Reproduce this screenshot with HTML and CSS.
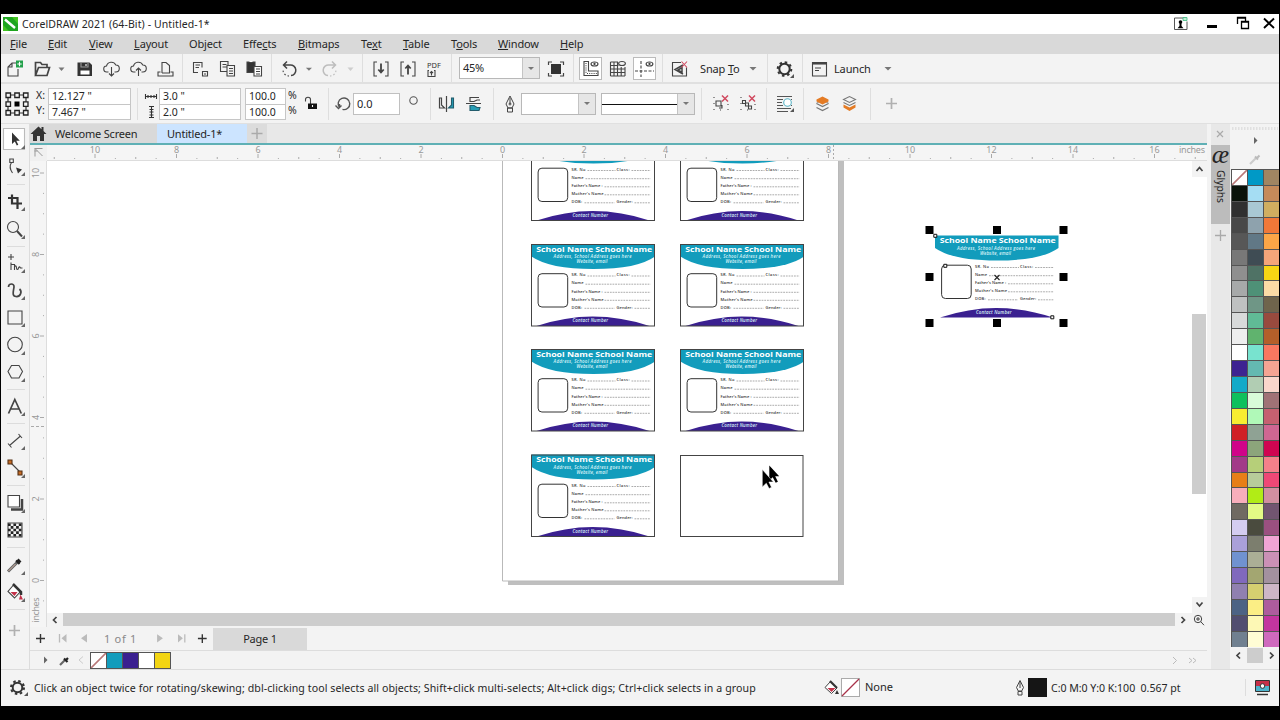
FILE: index.html
```html
<!DOCTYPE html>
<html lang="en">
<head>
<meta charset="utf-8">
<title>CorelDRAW 2021 (64-Bit) - Untitled-1*</title>
<link rel="stylesheet" href="styles.css">
</head>
<body>
<div class="app">
  <header class="titlebar">
    <svg class="logo" viewBox="0 0 15 14"><rect width="15" height="14" fill="#43c321"/><path d="M0 0h9L15 7v7H6L0 8z" fill="#1fa51f"/><path d="M2 2.5L12 11" stroke="#fff" stroke-width="2.4"/></svg>
    <span class="title">CorelDRAW 2021 (64-Bit) - Untitled-1*</span>
    <svg class="winbtns" viewBox="1170 14 109 20">
      <path d="M1186 18h-11.5v11.5h12.500v-8" fill="none" stroke="#555" stroke-width="1"/><circle cx="1180.500" cy="22" r="1.800"/><path d="M1179.500 22h2v4l2 2.200h-6l2-2.200z"/><path d="M1183 17.500h4v3h-4z" fill="#bff0d6" stroke="#3cb981" stroke-width=".8"/>
      <path d="M1207 25h10v3h-10z"/>
      <path d="M1237.500 24v-6.500h8v3.500M1237 18.200h9" fill="none" stroke="#000" stroke-width="1.300"/><path d="M1241.500 21.500h7v7h-7zM1241 22.200h8" fill="#fff" stroke="#000" stroke-width="1.300"/>
      <path d="M1264 18.500l10 9.500M1274 18.500l-10 9.500" stroke="#000" stroke-width="1.900"/>
    </svg>
  </header>

  <nav class="menu">
    <span><u>F</u>ile</span><span><u>E</u>dit</span><span><u>V</u>iew</span><span><u>L</u>ayout</span><span>Ob<u>j</u>ect</span><span>Effe<u>c</u>ts</span><span><u>B</u>itmaps</span><span>Te<u>x</u>t</span><span><u>T</u>able</span><span>T<u>o</u>ols</span><span><u>W</u>indow</span><span><u>H</u>elp</span>
  </nav>

  <div class="toolbar">
    <svg class="ic" viewBox="0 0 27 27"><path d="M15 8H11L7 12v9h10v-7M11 8v4H7"/><path d="M15 5.500h7v7h-7z" fill="#22a04a" stroke="none"/><path d="M18.500 6.800v4.400M16.300 9h4.400" stroke="#fff"/></svg>
    <svg class="ic" viewBox="0 0 27 27"><path d="M7.500 20V7.500h5l1.500 2h5v3M7.500 20.500l3-8h11l-2.500 8z" fill="none" stroke-width="1.700"/></svg>
    <svg class="ar" viewBox="0 0 15 27"><path d="M3.500 12.500h6l-3 3.500z"/></svg>
    <svg class="ic" viewBox="0 0 27 27"><path d="M7.500 7.500h12l2.500 2.500v11H7.500z" fill="#333" stroke="none"/><path d="M10.500 15.500h9v4h-9z" fill="#fff" stroke="none"/><path d="M11 8v4h7v-4" stroke="#999"/><path d="M16 9v2" stroke="#fff"/></svg>
    <svg class="ic" viewBox="0 0 27 27"><path d="M11.500 17H10a3 3 0 0 1-.5-6 5 5 0 0 1 9.300-1 3.500 3.500 0 0 1 0 7H17.500M14.500 12v9M12 18.500l2.500 2.500 2.500-2.500"/></svg>
    <svg class="ic" viewBox="0 0 27 27"><path d="M11.500 17H10a3 3 0 0 1-.5-6 5 5 0 0 1 9.300-1 3.500 3.500 0 0 1 0 7H17.500M14.500 21v-8M12 15.500l2.500-2.500 2.500 2.500"/></svg>
    <svg class="ic" viewBox="0 0 27 27"><path d="M9.500 17H7v4h15v-4h-2.500M11 18V7.500h4l3.500 3V18h-7.500" /></svg>
    <i class="sep"></i>
    <svg class="ic" viewBox="0 0 27 27"><path d="M12 17.500H7.500V7.500H16v5M9.500 10h4.500M9.500 12.500h3.500M16.500 16.500h5v4.500h-5zM18 19h2"/></svg>
    <svg class="ic" viewBox="0 0 27 27"><path d="M14 16.500H7.500v-10H15v4M9.500 9.500h4M9.500 12h4M14 10.500h7.500V21H14zM16 13.500h4M16 16h4M16 18.500h4"/></svg>
    <svg class="ic" viewBox="0 0 27 27"><path d="M7 7h8v10.500H7z" fill="#333"/><path d="M9.500 6.500h3" stroke="#fff"/><path d="M14 11.500h7.500V21H14z" fill="#fff"/><path d="M16 14h4M16 16.500h4M16 19h4"/></svg>
    <i class="sep"></i>
    <svg class="ic" viewBox="0 0 27 27"><path d="M12 6.500L8.500 10l3.500 3.500M9 10h6a5.300 5.300 0 0 1 1 10.600" stroke-width="1.500"/><path d="M14 21a6 6 0 0 1-6-6" stroke-dasharray="1.500 2"/></svg>
    <svg class="ar w13" viewBox="0 0 15 27"><path d="M4.500 12.500h7l-3.500 3.500z"/></svg>
    <svg class="ic faint" viewBox="0 0 27 27"><path d="M17 6.500l3.500 3.500-3.500 3.500M20 10h-6a5.300 5.300 0 0 0-1 10.600" stroke-width="1.500"/><path d="M15 21a6 6 0 0 0 6-6" stroke-dasharray="1.500 2"/></svg>
    <svg class="ar w16 faint" viewBox="0 0 15 27"><path d="M5 12.500h6l-3 3.500z"/></svg>
    <i class="sep"></i>
    <svg class="ic" viewBox="0 0 27 27"><path d="M11 7H8v14h3M19 7h3v14h-3"/><path d="M15 8.500v9M12.300 14.500l2.700 3 2.700-3" stroke-width="1.800"/></svg>
    <svg class="ic" viewBox="0 0 27 27"><path d="M11 7H8v14h3M19 7h3v14h-3"/><path d="M15 19.500v-9M12.300 13.500l2.700-3 2.700 3" stroke-width="1.800"/></svg>
    <svg class="ic" viewBox="0 0 27 27"><text x="7" y="13" class="pdf">PDF</text><path d="M9 15.500H8v6h7v-6h-1M11.500 20.500v-4M10 18l1.500-1.500L13 18"/></svg>
    <i class="sep w9"></i>
    <div class="combo zoomlevel"><span>45%</span><b></b></div>
    <svg class="ic" viewBox="0 0 27 27"><path d="M9 9h10v10H9z" fill="#333" stroke="none"/><path d="M6.500 10V7H10M18 7h3.500v3M21.500 18v3H18M10 21H6.500v-3" stroke-width="1.200"/></svg>
    <i class="sep"></i>
    <svg class="ic boxed" viewBox="0 0 27 27"><path d="M7 6.500h4.500v9.500h9.500v4.500H7z"/><path d="M9 8v11M10 18.500h10" stroke-dasharray="1 1.200"/><ellipse cx="17.500" cy="9" rx="3.500" ry="2"/><circle cx="17.500" cy="9" r=".6"/></svg>
    <svg class="ic" viewBox="0 0 27 27"><path d="M6.500 7H14M6.500 10.500h8M6.500 14H21M6.500 17.500H21M6.500 21H21M6.500 7v14M10 7v14M13.500 7v14M17.200 12v9M21 12v9"/><ellipse cx="18" cy="8.500" rx="3.400" ry="2"/></svg>
    <svg class="ic boxed" viewBox="0 0 27 27"><path d="M10 6v16M4 16h19" stroke-dasharray="3 1.500"/><ellipse cx="18.500" cy="9" rx="3.400" ry="2"/><circle cx="18.500" cy="9" r=".6"/></svg>
    <i class="sep"></i>
    <svg class="ic" viewBox="0 0 27 27"><path d="M15 7.500H6.500V21h14v-8.500"/><path d="M17 10l-8 4.500 8 4.500M16 12.500v5l-4-2.500z" stroke-width="1.500"/><path d="M15.500 6.500l5.500 6M21 6.500l-5.500 6" stroke="#d04a60"/></svg>
    <span class="label snap">Snap <u>T</u>o</span>
    <svg class="ar w20" viewBox="0 0 15 27"><path d="M4 12h7l-3.500 3.500z"/></svg>
    <i class="sep"></i>
    <svg class="ic" viewBox="0 0 27 27"><circle cx="13.500" cy="14" r="5.200" stroke="#333" stroke-width="2"/><circle cx="13.500" cy="14" r="6.800" stroke="#333" stroke-width="2" stroke-dasharray="2.500 2.840"/><path d="M23 19v4h-4z" fill="#555" stroke="none"/></svg>
    <i class="sep"></i>
    <svg class="ic" viewBox="0 0 27 27"><path d="M6.500 7.500h14V21h-14z"/><path d="M6.500 8.300h14" stroke-width="2.500"/><path d="M9 13h6M9 15.500h4"/></svg>
    <span class="label launch">Launch</span>
    <svg class="ar w20" viewBox="0 0 15 27"><path d="M4 12h7l-3.500 3.500z"/></svg>
  </div>

  <div class="propbar">
    <svg class="origin" viewBox="0 0 24 24"><path d="M3 3h18v18H3z" fill="none" stroke="#333" stroke-width="1.200"/><g fill="#f8f8f8" stroke="#222" stroke-width="1.300"><path d="M1 1h4.500v4.500H1zM9.800 1h4.500v4.500H9.800zM18.500 1H23v4.500h-4.500zM1 9.800h4.500v4.500H1zM18.500 9.800H23v4.500h-4.500zM1 18.500h4.500V23H1zM9.800 18.500h4.500V23H9.800zM18.500 18.500H23V23h-4.500z"/></g><path d="M9.500 9.500h5v5h-5z"/></svg>
    <div class="pair names"><span>X:</span><span>Y:</span></div>
    <div class="pair inputs pos"><span>12.127 "</span><span>7.467 "</span></div>
    <i class="sep w13"></i>
    <svg class="dims" viewBox="0 0 14 32"><path d="M1 8.500h12M1.500 6v5M4 7v3M7 7v3M10 7v3M12.500 6v5M7.500 18v12M5 18.500h5M5.500 21.500h4M5.500 24h4M5.500 27h4M5 29.500h5" stroke="#333" stroke-width="1.100"/></svg>
    <div class="pair inputs size"><span>3.0 "</span><span>2.0 "</span></div>
    <div class="pair inputs scale"><span>100.0</span><span>100.0</span></div>
    <div class="pair names pct"><span>%</span><span>%</span></div>
    <svg class="ic" viewBox="0 0 27 27"><path d="M11.500 14V9.500c0-3-5-3-5 0v2" /><path d="M9 13.500h9V19H9z" fill="#111" stroke="none"/><path d="M13.500 15v2" stroke="#fff"/></svg>
    <i class="sep w5"></i>
    <svg class="ic rot" viewBox="0 0 27 27"><path d="M9.500 17.500a5.800 5.800 0 1 1 3 1.900M9.500 18v-4M5.500 15.500l3 3 3-3" stroke-width="1.400" stroke="#555"/></svg>
    <div class="field angle">0.0</div>
    <svg class="ic" viewBox="0 0 27 27"><circle cx="13.500" cy="10.500" r="3.700" stroke="#555"/></svg>
    <i class="sep w6"></i>
    <svg class="ic" viewBox="0 0 27 27"><path d="M6.500 8v10h5l-3-3V8zM13.500 6v16" stroke-width="1.200"/><path d="M20.500 8v10h-5l3-3V8z" fill="#279db5" stroke="#235c6c"/></svg>
    <svg class="ic" viewBox="0 0 27 27"><path d="M19 7.500h-9v4h4l3-1.500h3M6 13.500h15" stroke-width="1.200"/><path d="M19 20.500h-9v-5h4l3 2h3z" fill="#279db5" stroke="#235c6c"/></svg>
    <i class="sep w13"></i>
    <svg class="nib" viewBox="0 0 20 27"><path d="M10 6l-4 8 2 4h4l2-4zM10 8v6M7.500 18h5v4h-5z"/><circle cx="10" cy="14" r="1"/></svg>
    <div class="combo outline"><span></span><b></b></div>
    <div class="combo linestyle"><span><hr></span><b></b></div>
    <i class="sep w12"></i>
    <svg class="ic" viewBox="0 0 27 27"><path d="M7 7v1M7 13v1M7 19v1M13 20h1M21 19v1M21 14v1" /><path d="M9 11h5v5H9zM12 18h3v-3"/><path d="M15 5.500l6 6M21 5.500l-6 6" stroke="#d04a60" stroke-width="1.500"/></svg>
    <svg class="ic" viewBox="0 0 27 27"><path d="M7 7v1M7 13v1M7 19v1M13 20h1M21 19v1M21 14v1"/><path d="M8.500 10.500h3v3h-3zM11.500 13h3v3h-3zM14.500 16h3v3h-3z"/><path d="M15 5.500l6 6M21 5.500l-6 6" stroke="#d04a60" stroke-width="1.500"/></svg>
    <i class="sep w10"></i>
    <svg class="ic" viewBox="0 0 27 27"><path d="M6 6.500h15M6 9.500h6M6 12.500h5M6 15.500h6M6 18.500h14M6 21.500h11M20 9.500h1M20 15.500h1" stroke="#555"/><circle cx="16.500" cy="12.500" r="3.800" fill="#fff" stroke="#5bb5c6"/><path d="M23 18v4h-4z" fill="#555" stroke="none"/></svg>
    <i class="sep w11"></i>
    <svg class="ic" viewBox="0 0 27 27"><path d="M7.500 13.500l6 3 6-3M7.500 17.500l6 3 6-3M7.500 13.500l2-1M19.500 13.500l-2-1" stroke="#777" stroke-width="1.300"/><path d="M7.500 9.500l6-3 6 3v2l-6 3-6-3z" fill="#e47b24" stroke="none"/></svg>
    <svg class="ic" viewBox="0 0 27 27"><path d="M7.500 9.500l6-3 6 3-6 3zM7.500 12.500l6 3 6-3" stroke="#777"/><path d="M7.500 14.500l6 3 6-3v3l-6 3.500-6-3.500z" fill="#e47b24" stroke="none"/></svg>
    <i class="sep w15"></i>
    <svg class="plus" viewBox="0 0 27 27"><path d="M13.500 8v11M8 13.500h11"/></svg>
  </div>

  <main class="main">
    <aside class="toolbox">
      <svg class="ic" viewBox="0 0 27 27"><path d="M3.500 2.500h21v21h-21z" fill="#fff" stroke="#bbb"/><path d="M12 6.500v11.500l2.800-2.500 2 4 1.500-.8-2-4h3.500z" fill="#333" stroke="none"/><path class="corner" d="M25 19v4h-4z"/></svg>
      <svg class="ic" viewBox="0 0 27 27"><path d="M11.500 9.500c-2 3-1.500 7 1 10.500M9.800 6h3.500v3.500H9.800z"/><path d="M16 14.500l6 2-4 4z" fill="#333" stroke="none"/><path class="corner" d="M25 19v4h-4z"/></svg>
      <i></i>
      <svg class="ic" viewBox="0 0 27 27"><path d="M8 10h9.500V21M12 6.500V15.500H22" stroke="#333" stroke-width="2.200"/><path class="corner" d="M25 19v4h-4z"/></svg>
      <svg class="ic" viewBox="0 0 27 27"><circle cx="13" cy="12" r="5.500"/><path d="M17 16l5 5.500" stroke-width="2"/><path class="corner" d="M25 20v4h-4z"/></svg>
      <i></i>
      <svg class="ic" viewBox="0 0 27 27"><path d="M8 7h6M11 4v6M11 12.500V20M11 14.500h3.500v5.500M14.500 17c1-2 2-1 2 1s1.500 2 2 0 1.500-1 2 0h2"/><path class="corner" d="M25 19v4h-4z"/></svg>
      <svg class="ic" viewBox="0 0 27 27"><path d="M8.500 10c0-4 6-4 5.500 0-.5 4-2.500 9 2 9.500s6.500-5 3.500-7.500" stroke-width="1.700"/><path class="corner" d="M25 19v4h-4z"/></svg>
      <svg class="ic" viewBox="0 0 27 27"><path d="M8 7h14v13H8z"/><path class="corner" d="M25 19v4h-4z"/></svg>
      <svg class="ic" viewBox="0 0 27 27"><circle cx="15" cy="13.500" r="7.300"/><path class="corner" d="M25 20v4h-4z"/></svg>
      <svg class="ic" viewBox="0 0 27 27"><path d="M11.500 7.500h7.500l3.500 6-3.500 6.500h-7.500L8 13.500z"/><path class="corner" d="M25 20v4h-4z"/></svg>
      <i></i>
      <svg class="ic" viewBox="0 0 27 27"><path d="M8.500 20.500L14.800 6.500l6.500 14M10.500 16h8.500" stroke-width="1.700"/><path class="corner" d="M25 19v4h-4z"/></svg>
      <i class="tight"></i>
      <svg class="ic" viewBox="0 0 27 27"><path d="M9.500 18.500L20.500 9M8 16.500l3.500 4M18.500 7l3.500 4"/><path class="corner" d="M25 19v4h-4z"/></svg>
      <svg class="ic" viewBox="0 0 27 27"><path d="M10 8l10 10"/><path d="M8 6h4v4H8zM18 17h4v4h-4z" fill="#c46a24" stroke="#553014"/><path class="corner" d="M25 20v4h-4z"/></svg>
      <i></i>
      <svg class="ic" viewBox="0 0 27 27"><path d="M11 20.500h11V10" stroke="#444" stroke-width="2.500"/><path d="M8 6.500h11.500V18H8z" fill="#fff"/><path class="corner" d="M25 20v4h-4z"/></svg>
      <svg class="ic" viewBox="0 0 27 27"><path d="M8 7h14v14H8z"/><path d="M8 8.700h14M8 14h14M8 19.200h14" stroke-width="2.600" stroke-dasharray="2.700 2.700" stroke="#222"/><path d="M10.700 11.400h11M10.700 16.600h11" stroke-width="2.600" stroke-dasharray="2.700 2.700" stroke="#222"/></svg>
      <i></i>
      <svg class="ic" viewBox="0 0 27 27"><path d="M8 20.500l9.500-9.500" stroke="#666" stroke-width="3"/><path d="M8.500 20l7-7" stroke="#dba" stroke-width="1"/><path d="M16 9.500l3.500 3.500" stroke="#222" stroke-width="2"/><path d="M18 11l2-2" stroke="#222" stroke-width="4"/><path class="corner" d="M25 20v4h-4z"/></svg>
      <svg class="ic" viewBox="0 0 27 27"><path d="M13.500 7l7 6.500-6 6.500L8 13.500z" fill="#fff"/><path d="M10.500 14h7l-3 4z" fill="#c33048" stroke="none"/><path d="M13 6l8 8v3" stroke="#333" stroke-width="2.500"/><path d="M20.500 16.500l2.500 5h-4z" fill="#c33048" stroke="none"/><path class="corner" d="M25 20v4h-4z"/></svg>
      <i></i>
      <svg class="plus tool" viewBox="0 0 27 27"><path d="M14.500 8v11M9 13.500h11"/></svg>
    </aside>

    <section class="doc">
      <div class="tabs">
        <svg class="home" viewBox="0 0 28 19"><path d="M8.500 2.500L0.500 10H3v7h4v-5h3v5h4v-7h2.500L13.500 7V3h-2v2.200z" fill="#333"/></svg>
        <span class="tab">Welcome Screen</span>
        <span class="tab active">Untitled-1*</span>
        <svg class="newtab" viewBox="0 0 20 19"><path d="M10 4v11M4.500 9.500h11" stroke="#aaa" stroke-width="1.500"/></svg>
      </div>
      <div class="work">
        <svg class="corner-box" viewBox="0 0 16 16"><path d="M4 3.500h8M4.500 3.500v8M5 4l7 7M4 6h3" stroke="#999" fill="none"/></svg>
        <svg class="hruler" id="hruler" viewBox="47 145 1160 16"></svg>
        <svg class="vruler" id="vruler" viewBox="30 161 17 466"></svg>
        <div class="view">
          <svg class="canvas" viewBox="47 161 1145 452">
            <defs>
              <g id="idcard">
                <path d="M0 0H123.500V12.500Q106 25 62 25Q18 25 0 12.500z" fill="#129cbc"/>
                <text class="c-title" x="4.700" y="7.900" textLength="116" lengthAdjust="spacingAndGlyphs">School Name School Name</text>
                <text class="c-sub" x="22" y="14" textLength="78">Address, School Address goes here</text>
                <text class="c-sub" x="45" y="19" textLength="31">Website, email</text>
                <rect x="6.600" y="29.700" width="29.600" height="33.300" rx="3.800" fill="#fff" stroke="#333" stroke-width="1"/>
                <g class="c-lab">
                  <text x="40" y="32.300" textLength="14">SR. No</text><text x="85" y="32.300" textLength="13">Class:</text>
                  <text x="40" y="40.400" textLength="12">Name</text>
                  <text x="40" y="48.500" textLength="31">Father's Name :</text>
                  <text x="40" y="56.500" textLength="32">Mother's Name</text>
                  <text x="40" y="64.500" textLength="10.500">DOB:</text><text x="85" y="64.500" textLength="16">Gender:</text>
                </g>
                <path d="M56 32h28M100 32h19M54 40.200h65M73 48.300h46M73 56.300h46M53 64.300h30M103 64.300h16" stroke="#888" stroke-width=".7" stroke-dasharray="1.800 .9"/>
                <path d="M5 82Q34 72.500 61 72.500Q90 72.500 118 82z" fill="#3a2090"/>
                <text class="c-sub" x="41" y="78.200" textLength="35.500">Contact Number</text>
              </g>
            </defs>
            <path d="M508 161H844V585H508z" fill="#bfbfbf"/>
            <path d="M502.500 150H838.500V581H502.500z" fill="#fff" stroke="#b9b9b9"/>
            <g id="cards"></g>
            <rect class="frame" x="680.500" y="455.500" width="122.500" height="81"/>
            <g>
              <use href="#idcard" x="935" y="235.500"/>
              <path d="M925.500 226h8v8h-8zM993 226h8v8h-8zM1059.500 226h8v8h-8zM925.500 273h8v8h-8zM1059.500 273h8v8h-8zM925.500 319h8v8h-8zM993 319h8v8h-8zM1059.500 319h8v8h-8z"/>
              <path d="M994.500 275l5 5M999.500 275l-5 5" stroke="#222" stroke-width="1.100"/>
              <path d="M933.800 234.300h3v3h-3zM943.800 264.300h3v3h-3zM1050.800 315.800h3v3h-3z" fill="#fff" stroke="#111" stroke-width="1"/>
            </g>
            <path id="pointer" d="M769.300 465.500v15l3.400-3.200 3 5.500 2.200-1.100-2.700-5.500h4z"/>
            <path d="M762.300 469.500v17.500l4-3.800 2.800 5.300 2.400-1.200-2.600-5.300h4.500z" stroke="#fff" stroke-width=".5"/>
          </svg>
          <div class="vscroll">
            <svg viewBox="0 0 15 16"><path d="M4.500 10l3-3.500 3 3.500"/></svg>
            <div class="track"><b></b></div>
            <svg viewBox="0 0 15 16"><path d="M4.500 5.500l3 3.500 3-3.500"/></svg>
          </div>
          <div class="hscroll">
            <svg viewBox="0 0 16 14"><path d="M9.500 4L6.500 7l3 3"/></svg>
            <b></b>
            <svg viewBox="0 0 16 14"><path d="M6.500 4l3 3-3 3"/></svg>
            <svg viewBox="0 0 16 14"><g stroke-width="1"><circle cx="7" cy="6" r="3.700"/><path d="M9.800 8.700l3.200 3.500M5 6h4M7 4v4"/></g></svg>
          </div>
        </div>
      </div>
      <div class="pages">
        <svg class="pagenav" viewBox="30 628 72 22"><path d="M36 638.500h9M40.500 634v9" stroke="#333" stroke-width="1.400"/><path d="M59.500 634v8.500" stroke="#bbb" stroke-width="1.300"/><path d="M66.500 634v8.500l-5-4.200zM87 634v8.500l-6-4.200z" fill="#bbb"/></svg>
        <span class="count">1 of 1</span>
        <svg class="pagenav2" viewBox="141 628 72 22"><path d="M155.500 634v8.500l6-4.200zM177 634v8.500l5-4.200z" fill="#bbb"/><path d="M184 634v8.500" stroke="#bbb" stroke-width="1.300"/><path d="M197.500 638.500h9M202 634v9" stroke="#333" stroke-width="1.400"/></svg>
        <span class="pagetab">Page 1</span>
      </div>
      <div class="docpal">
        <svg class="docpal-l" viewBox="30 651 60 19"><path d="M44 656.500v7l3.500-3.500z" fill="#666"/><path d="M60 665l5-5" stroke="#666" stroke-width="2.200"/><path d="M64 658.500l3.500 3.500M66 660l2-2" stroke="#222" stroke-width="2.200"/><path d="M83 656.500l-4 3.500 4 3.500" fill="none" stroke="#ccc"/></svg>
        <span class="chips"><i class="none"></i><i class="teal"></i><i class="indigo"></i><i class="white"></i><i class="yellow"></i></span>
        <svg class="docpal-r" viewBox="0 0 40 19"><path d="M6 6l3.500 3.500L6 13M22 7l3 2.500-3 2.500M26 7l3 2.500-3 2.500" fill="none" stroke="#bbb"/></svg>
      </div>
    </section>

    <aside class="docker">
      <svg class="dx" viewBox="0 0 19 21"><path d="M6 7l6 6M12 7l-6 6" stroke="#aaa" stroke-width="1.200"/></svg>
      <div class="glyphs"><span class="ae">æ</span><span class="gl">Glyphs</span></div>
      <svg class="dplus" viewBox="0 0 19 22"><path d="M9.500 6v11M4 11.500h11" stroke="#aaa" stroke-width="1.300"/></svg>
    </aside>

    <aside class="palette">
      <svg class="paltop" viewBox="1231 124 48 45"><path d="M1232 128.500h46" stroke="#e0e0e0" stroke-width="3" stroke-dasharray="1.500 1.500"/><path d="M1254 137v7l3.500-3.500z" fill="#666"/><path d="M1250 164l6-6" stroke="#ccc" stroke-width="2.200"/><path d="M1255 156.500l3 3M1257 158l2.500-2.500" stroke="#bbb" stroke-width="2"/></svg>
      <div class="swatches" id="swatches"></div>
      <div class="palscroll"><svg viewBox="0 0 16 15"><path d="M9 4.500L6 7.500l3 3"/></svg><b></b><svg viewBox="0 0 16 15"><path d="M7 4.500l3 3-3 3"/></svg></div>
    </aside>
  </main>

  <footer class="status">
    <svg class="gear" viewBox="0 0 32 36"><circle cx="16.500" cy="17.500" r="4.800" stroke="#333" stroke-width="2"/><circle cx="16.500" cy="17.500" r="6.500" stroke="#333" stroke-width="2" stroke-dasharray="2.500 2.600"/><path d="M27 22v4h-4z" fill="#555"/></svg>
    <span class="hint">Click an object twice for rotating/skewing; dbl-clicking tool selects all objects; Shift+click multi-selects; Alt+click digs; Ctrl+click selects in a group</span>
    <svg class="fillic" viewBox="822 670 42 36"><path d="M830.500 681.500l6.500 6.500-5.500 5.500-6.500-6z" fill="#fff" stroke="#444"/><path d="M827.500 688h8l-4 4z" fill="#c33048"/><path d="M830 681l7 7" stroke="#333" stroke-width="2.200"/><path d="M837 690l2 4h-4z" fill="#333"/><rect x="841.500" y="678.500" width="18" height="18" fill="#fff" stroke="#aaa"/><path d="M842 696l17-17" stroke="#a8324a" stroke-width="1.300"/></svg>
    <span class="fillname">None</span>
    <svg class="penic" viewBox="1012 670 36 36"><path d="M1020 680.500l-3.500 7 1.800 3.500h3.400l1.800-3.500zM1020 682v6M1018 691.500h4v3.500h-4z" fill="none" stroke="#444"/><path d="M1028 678h19v19h-19z" fill="#151515"/></svg>
    <span class="pen">C:0 M:0 Y:0 K:100&nbsp; 0.567 pt</span>
    <svg class="monitor" viewBox="1240 670 39 36"><path d="M1245.500 679v17" stroke="#ddd"/><path d="M1255.500 680.500h14v11h-14z" fill="#4db4cc" stroke="#333"/><path d="M1256 681h13v5h-13z" fill="#c53048"/><circle cx="1262.500" cy="686" r="2.300" fill="#fff" stroke="#333"/><path d="M1257 694.500h11" stroke="#333" stroke-width="1.500"/></svg>
  </footer>
</div>
<script src="app.js"></script>
</body>
</html>
```
FILE: styles.css
```css
* { box-sizing: border-box; }
body { margin: 0; background: #000; font-family: "Noto Sans", "Open Sans", sans-serif; font-size: 11px; color: #262626; }
svg { display: block; flex: none; }
i { font-style: normal; }
u { text-underline-offset: 1px; }
.app { width: 1278px; height: 692px; margin: 14px 0 0 1px; display: flex; flex-direction: column; background: #f3f3f3; overflow: hidden; white-space: nowrap; }

.titlebar { height: 20px; flex: none; display: flex; align-items: center; background: #fff; padding-left: 2px; }
.logo { width: 15px; height: 14px; }
.title { margin-left: 4px; flex: 1; font-size: 10.5px; letter-spacing: .1px; }
.winbtns { width: 109px; height: 20px; }

.menu { height: 20px; flex: none; display: grid; grid-template-columns: 38px 41px 45px 55px 54px 55px 63px 42px 48px 47px 62px 40px; align-items: center; background: #d9d9d9; padding-left: 9px; line-height: 20px; letter-spacing: -.15px; }

.toolbar { height: 30px; flex: none; display: flex; align-items: center; border-bottom: 2px solid #e0e0e0; }
.ic { width: 27px; height: 27px; fill: none; stroke: #444; stroke-width: 1.1; }
.faint { opacity: .3; }
.ar { width: 15px; height: 27px; fill: #777; }
.w13 { width: 13px; } .w16 { width: 16px; } .w20 { width: 20px; }
.sep { width: 8px; height: 28px; flex: none; background: linear-gradient(#dedede, #dedede) center / 1px 100% no-repeat; }
.sep.w5 { width: 5px; } .sep.w6 { width: 6px; } .sep.w9 { width: 9px; } .sep.w10 { width: 10px; } .sep.w11 { width: 11px; } .sep.w12 { width: 12px; } .sep.w13 { width: 13px; } .sep.w15 { width: 15px; }
.pdf { font-size: 7.5px; fill: #333; stroke: none; }
.combo { display: flex; flex: none; height: 22px; border: 1px solid #b8b8b8; background: #fff; line-height: 20px; }
.combo span { flex: 1; padding-left: 3px; }
.combo b { width: 17px; background: #e6e6e6; border-left: 1px solid #c4c4c4; display: grid; place-items: center; }
.combo b::after { content: ""; border: 3.5px solid transparent; border-top-color: #777; border-bottom: 0; }
.zoomlevel { width: 81px; margin-left: 3px; margin-right: 2px; letter-spacing: -.3px; }
.boxed { background: linear-gradient(#bbb, #bbb) 2px 2px / 22px 1px no-repeat, linear-gradient(#bbb, #bbb) 2px 24px / 22px 1px no-repeat, linear-gradient(#bbb, #bbb) 2px 2px / 1px 22px no-repeat, linear-gradient(#bbb, #bbb) 24px 2px / 1px 23px no-repeat, linear-gradient(#fff, #fff) 3px 3px / 21px 21px no-repeat; }
.label { flex: none; letter-spacing: -.15px; }
.snap { width: 43px; margin-left: 7px; }
.launch { width: 44px; margin-left: 1px; }

.propbar { height: 40px; flex: none; display: flex; align-items: center; padding-left: 4px; border-bottom: 1px solid #e0e0e0; }
.propbar .sep { height: 32px; }
.origin { width: 24px; height: 24px; }
.pair { flex: none; display: flex; flex-direction: column; height: 31px; line-height: 15px; font-size: 10.5px; }
.names { width: 12px; margin-left: 7px; }
.inputs { border: 1px solid #c6c6c6; background: #fff; height: 32px; }
.inputs span { flex: 1; padding-left: 3px; }
.inputs span + span { border-top: 1px solid #c6c6c6; }
.pos { width: 83px; } .size { width: 82px; margin-left: 1px; } .scale { width: 41px; margin-left: 4px; }
.dims { width: 14px; height: 32px; }
.pct { margin-left: 2px; width: 11px; }
.rot { margin-left: -1px; }
.field { flex: none; height: 22px; border: 1px solid #c0c0c0; background: #fff; padding-left: 3px; line-height: 20px; }
.angle { width: 47px; margin-left: -4px; }
.nib { width: 20px; height: 27px; fill: none; stroke: #444; }
.outline { width: 75px; margin-left: 1px; } .linestyle { width: 94px; margin-left: 5px; }
.linestyle span { padding: 0; }
.linestyle hr { margin: 10px 0 0; border: 0; border-top: 1px solid #111; }
.plus { width: 27px; height: 27px; stroke: #b0b0b0; stroke-width: 1.7; }

.main { height: 546px; flex: none; display: flex; border-bottom: 1px solid #dcdcdc; }
.toolbox { width: 29px; flex: none; padding-top: 2px; border-right: 1px solid #dcdcdc; }
.toolbox .ic { margin-left: -1px; }
.toolbox i { display: block; height: 8px; margin: 0 4px 0 6px; background: linear-gradient(#dcdcdc, #dcdcdc) center / 100% 1px no-repeat; }
.toolbox i.tight { height: 7px; }
.toolbox .tool { height: 35px; margin-left: -1px; }
.corner { fill: #666; stroke: none; }

.doc { width: 1177px; flex: none; display: flex; flex-direction: column; }
.tabs { height: 21px; flex: none; display: flex; background: #e8e8e8; border-bottom: 2px solid #5fb0b5; line-height: 19px; letter-spacing: -.2px; }
.home { width: 28px; height: 19px; background: #d9d9d9; }
.tab { width: 99px; flex: none; background: #d9d9d9; text-indent: -3px; }
.tab.active { width: 90px; background: #cce4ff; padding-left: 10px; text-indent: 0; }
.newtab { width: 20px; height: 19px; background: #dcdcdc; }
.work { flex: none; height: 482px; display: grid; grid-template: 16px 466px / 17px 1160px; }
.corner-box { width: 17px; height: 16px; background: #f0f0f0; }
.hruler { width: 1160px; height: 16px; background: #f5f5f5; box-shadow: inset 0 -1px #ddd; }
.vruler { width: 17px; height: 466px; background: #f5f5f5; box-shadow: inset -1px 0 #ddd; overflow: visible; }
.rnum { font-size: 9px; fill: #999; text-anchor: middle; }
.rtick { stroke: #aaa; }
.view { display: grid; grid-template: 452px 14px / 1145px 15px; background: #fff; }
.canvas { width: 1145px; height: 452px; background: #fff; }
.frame { fill: none; stroke: #444; }
.c-title { font: bold 7.8px "Open Sans", sans-serif; fill: #fff; }
.c-sub { font: italic 600 4.4px "Open Sans", sans-serif; fill: #d9f3f8; }
.c-lab { font: 600 4px "Open Sans", sans-serif; fill: #333; }
.vscroll { display: flex; flex-direction: column; height: 452px; }
.vscroll svg, .hscroll svg, .palscroll svg { fill: none; stroke: #444; stroke-width: 1.7; }
.vscroll svg { width: 15px; height: 16px; background: #f3f3f3; }
.track { flex: 1; padding-top: 137px; }
.track b { display: block; width: 14px; height: 180px; background: #cdcdcd; }
.hscroll { grid-column: 1 / 3; display: flex; background: #f3f3f3; }
.hscroll svg { width: 16px; height: 14px; }
.hscroll b { flex: 1; background: #cdcdcd; height: 13px; }
.pages { height: 24px; flex: none; display: flex; border-bottom: 1px solid #ddd; padding-top: 1px; }
.pagenav { width: 72px; height: 22px; }
.count { width: 39px; color: #888; line-height: 22px; letter-spacing: .7px; margin-left: 2px; }
.pagenav2 { width: 70px; height: 22px; }
.pagetab { width: 94px; background: #d9d9d9; text-align: center; line-height: 22px; letter-spacing: -.2px; }
.docpal { height: 19px; flex: none; display: flex; align-items: center; }
.docpal-l { width: 60px; height: 19px; }
.chips { display: flex; border: 1px solid #555; height: 17px; }
.chips i { width: 16px; border-left: 1px solid #555; }
.chips i:first-child { border-left: 0; width: 15px; }
.none { background: linear-gradient(to bottom right, #fff 46%, #b87878 47%, #b87878 53%, #fff 54%); }
.teal { background: #129cbc; } .indigo { background: #3a2090; } .white { background: #fff; } .yellow { background: #f3d513; }
.docpal-r { width: 40px; height: 19px; margin-left: auto; }

.docker { width: 19px; margin-left: 4px; flex: none; background: #e8e8e8; }
.dx { width: 19px; height: 21px; }
.glyphs { width: 19px; height: 79px; background: #bcbcbc; display: flex; flex-direction: column; align-items: center; }
.ae { font: italic 26px/20px "Liberation Serif", serif; height: 24px; }
.gl { writing-mode: vertical-rl; line-height: 19px; margin-top: 1px; font-size: 10.3px; }
.dplus { width: 19px; height: 22px; }

.palette { flex: 1; min-width: 0; padding-left: 1px; }
.paltop { width: 48px; height: 45px; }
.swatches { display: grid; grid-template-columns: repeat(3, 16px); grid-auto-rows: 15.93px; gap: 0; height: 478px; overflow: hidden; border-left: 1px solid #555; border-top: 1px solid #555; }
.swatches i { border-right: 1px solid #555; border-bottom: 1px solid #555; }
.palscroll { display: flex; height: 15px; margin-top: 1px; }
.palscroll svg { width: 16px; height: 15px; }
.palscroll b { width: 16px; background: #cdcdcd; }

.status { height: 36px; flex: none; display: flex; align-items: center; }
.gear { width: 32px; height: 36px; fill: none; }
.hint { margin-left: 1px; width: 788px; flex: none; font-size: 10.6px; letter-spacing: .08px; }
.fillic { width: 42px; height: 36px; }
.fillname { width: 148px; flex: none; line-height: 14px; margin-top: -2px; margin-left: 1px; margin-right: -1px; }
.penic { width: 36px; height: 36px; }
.pen { margin-left: 3px; flex: 1; font-size: 10.6px; letter-spacing: -.04px; }
.monitor { width: 39px; height: 36px; }
```
FILE: app.js
```js
const NS = 'http://www.w3.org/2000/svg';
function add(parent, name, attrs, text) {
  const el = document.createElementNS(NS, name);
  for (const key in attrs) el.setAttribute(key, attrs[key]);
  if (text !== undefined) el.textContent = text;
  parent.appendChild(el);
}

// Rulers: a labelled tick every two inches, smaller ones every half inch.
const INCH = 40.75;
const h = document.getElementById('hruler');
for (let q = -22; q <= 34; q++) {
  const x = 502.5 + q * INCH / 2;
  const major = q % 4 === 0;
  add(h, 'path', { class: 'rtick', d: `M${x} ${major ? 154 : q % 2 ? 158 : 157}V${major ? 158 : 159}` });
  if (major && x > 60) add(h, 'text', { class: 'rnum', x, y: 153 }, Math.abs(q / 2));
}
add(h, 'text', { class: 'rnum', x: 1192, y: 153, textLength: 26 }, 'inches');
add(h, 'path', { class: 'rtick', d: 'M833.5 145V160', 'stroke-dasharray': '2 2' });

const v = document.getElementById('vruler');
for (let q = -1; q <= 20; q++) {
  const y = 580.5 - q * INCH / 2;
  const major = q % 4 === 0;
  add(v, 'path', { class: 'rtick', d: `M${major ? 40 : 43} ${y}H44` });
  if (major) add(v, 'text', { class: 'rnum', transform: `translate(39 ${y}) rotate(-90)` }, q / 2);
}
add(v, 'text', { class: 'rnum', textLength: 25, transform: 'translate(39 610) rotate(-90)' }, 'inches');
add(v, 'path', { class: 'rtick', d: 'M31 426.500H46', 'stroke-dasharray': '3 2' });

// Filled card slots on the page.
const cards = document.getElementById('cards');
[[531.5, 139], [680.5, 139], [531.5, 244.5], [680.5, 244.5], [531.5, 349.5], [680.5, 349.5], [531.5, 455]].forEach(([x, y]) => {
  add(cards, 'use', { href: '#idcard', x, y: y - 0.5 });
  add(cards, 'rect', { class: 'frame', x, y, width: 123, height: 81.5 });
});

const rows = [
  ['', '#0099c6', '#a08562'], ['#0a120a', '#a5ddf3', '#c58a5a'], ['#303030', '#a9c8d3', '#d0ae60'],
  ['#484848', '#8ea2ad', '#f07838'], ['#575757', '#617886', '#fba647'], ['#787878', '#3f4c54', '#f5a579'],
  ['#8f8f8f', '#4f7265', '#f7d614'], ['#a7a9a9', '#4e9177', '#fbdba6'], ['#bfc1c1', '#6f9686', '#6f644c'],
  ['#d8dada', '#60bb96', '#984a3e'], ['#eeeeee', '#60b36e', '#b45f2a'], ['#ffffff', '#78e3cf', '#f87860'],
  ['#3d2391', '#64b9b1', '#f4a493'], ['#12aac8', '#b1cdb3', '#f9d6cb'], ['#0fc05d', '#d9fbd9', '#a07276'],
  ['#f8ed31', '#b0f9b8', '#c56070'], ['#d02025', '#8fa294', '#cf6692'], ['#d00489', '#8ca57b', '#cf0551'],
  ['#a23a88', '#b6cf79', '#f4808a'], ['#e77f18', '#b7cc9a', '#ee4876'], ['#f8aebb', '#b1ec16', '#d18fa0'],
  ['#706a62', '#e3fa85', '#725570'], ['#d4cdf0', '#4a4b3e', '#9a5080'], ['#aaa0d9', '#7c7e6e', '#f0a4d4'],
  ['#7092d0', '#abae96', '#cb90b6'], ['#8069bd', '#a3a671', '#a3919f'], ['#9080b0', '#d5cf70', '#cdb6c6'],
  ['#4c6384', '#fbee85', '#ad5c9d'], ['#514e70', '#fdf8b5', '#c3359f'], ['#708090', '#fffdd5', '#cf69be']
];
const swatches = document.getElementById('swatches');
rows.flat().forEach(color => {
  const cell = document.createElement('i');
  if (color) cell.style.background = color; else cell.className = 'none';
  swatches.appendChild(cell);
});
```
